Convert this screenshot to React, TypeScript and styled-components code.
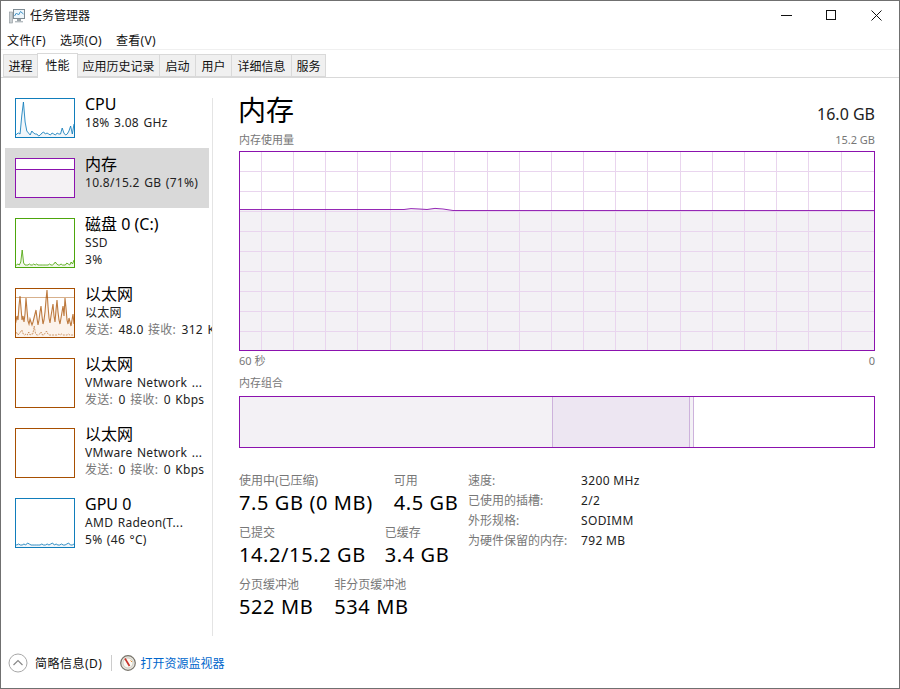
import React from "react";
import styled, { createGlobalStyle } from "styled-components";

const Global = createGlobalStyle`
  html, body { margin: 0; padding: 0; background: #fff; }
  body { font-family: "Noto Sans", "Noto Sans CJK SC", sans-serif; font-size: 12px; color: #000; }
  * { box-sizing: border-box; }
`;

const Window = styled.div`
  width: 900px; height: 689px; border: 1px solid #707070; display: flex; flex-direction: column; overflow: hidden; background: #fff;
`;
const TitleBar = styled.div`
  height: 29px; display: flex; align-items: center; padding-left: 8px; gap: 5px; flex: none;
`;
const TitleText = styled.span`font-size: 12px; color: #111; flex: 1; margin-top: -2px;`;
const Controls = styled.div`display: flex; align-items: center;`;
const ControlButton = styled.div`
  width: 45px; height: 29px; display: flex; align-items: center; justify-content: center;
  svg { display: block; margin-top: -1px; }
`;
const MenuBar = styled.div`
  height: 20px; display: flex; align-items: center; flex: none; padding: 1px 0 0 6px; gap: 14px; border-bottom: 1px solid #f0f0f0;
`;
const MenuItem = styled.span`font-size: 12px; color: #111; line-height: 19px; letter-spacing: 0.3px;`;
const TabStrip = styled.div`
  height: 28px; flex: none; display: flex; align-items: flex-end; padding-left: 2px; border-bottom: 1px solid #d9d9d9;
`;
const Tab = styled.div<{ $active?: boolean; $w: number }>`
  width: ${p => p.$w}px;
  height: ${p => (p.$active ? 25 : 23)}px;
  margin-bottom: ${p => (p.$active ? -1 : 0)}px;
  padding-bottom: ${p => (p.$active ? 3 : 0)}px;
  background: ${p => (p.$active ? "#fff" : "#f0f0f0")};
  border: 1px solid #d9d9d9;
  border-bottom: ${p => (p.$active ? "none" : "1px solid #d9d9d9")};
  margin-right: -1px;
  position: relative;
  z-index: ${p => (p.$active ? 1 : 0)};
  display: flex; align-items: center; justify-content: center;
  font-size: 12px; color: #111; white-space: nowrap;
`;
const Content = styled.div`flex: 1; display: flex; min-height: 0;`;
const Sidebar = styled.div`
  width: 212px; flex: none; padding-top: 10px; overflow: hidden; position: relative;
  &::after { content: ""; position: absolute; right: 0; top: 20px; bottom: 4px; width: 1px; background: #e4e4e4; }
`;
const Item = styled.div<{ $active?: boolean; $h: number }>`
  margin-left: 4px; width: 204px; height: ${p => p.$h}px; padding: 10px; display: flex; gap: 10px;
  background: ${p => (p.$active ? "#d9d9d9" : "transparent")};
`;
const ItemText = styled.div`margin-top: -4px; white-space: nowrap;`;
const ItemTitle = styled.div`font-size: 16px; line-height: 20px; color: #000;`;
const ItemLine = styled.div`font-size: 12px; line-height: 17px; color: #222; letter-spacing: 0.3px; word-spacing: 1px;`;
const Muted = styled.span`color: #777; margin-right: 1px;`;
const Main = styled.div`flex: 1; padding: 16px 24px 0 26px; min-width: 0;`;
const HeadRow = styled.div`display: flex; justify-content: space-between; align-items: flex-start; height: 39px;`;
const Heading = styled.h1`margin: 0 0 0 -1px; font-size: 28px; font-weight: 400; line-height: 32px; color: #000;`;
const Capacity = styled.span`font-size: 16px; line-height: 22px; color: #222; margin-top: 9px;`;
const CaptionRow = styled.div<{ $mt?: number; $mb?: number }>`
  display: flex; justify-content: space-between; font-size: 11px; line-height: 14px; color: #777;
  margin-top: ${p => p.$mt ?? 0}px; margin-bottom: ${p => p.$mb ?? 0}px;
`;
const ChartFrame = styled.svg`display: block; width: 636px;`;
const StatsArea = styled.div`display: flex; margin-top: 25px;`;
const StatsLeft = styled.div`width: 229px; flex: none; display: flex; flex-direction: column; gap: 9px;`;
const StatRow = styled.div<{ $gap: number }>`display: flex; gap: ${p => p.$gap}px; white-space: nowrap;`;
const Stat = styled.div``;
const StatLabel = styled.div`font-size: 12px; line-height: 16px; color: #777;`;
const StatValue = styled.div`font-size: 20px; line-height: 27px; color: #000; letter-spacing: 0.6px;`;
const Specs = styled.div`display: grid; grid-template-columns: 113px auto; grid-auto-rows: 20px; align-items: center; font-size: 12px; justify-content: start; margin-top: -3px; align-self: flex-start;`;
const SpecKey = styled.span`color: #777;`;
const SpecValue = styled.span`color: #222; letter-spacing: 0.35px;`;
const Footer = styled.div`height: 48px; flex: none; display: flex; align-items: center; padding: 0 0 2px 7px;`;
const FooterLabel = styled.span`font-size: 12px; color: #111; margin-left: 7px; letter-spacing: 0.5px;`;
const Divider = styled.span`width: 1px; height: 16px; background: #ccc; margin: 0 8px 0 9px;`;
const FooterLink = styled.span`font-size: 12px; color: #0066cc; margin-left: 4px;`;

const spark = (pts: number[], step: number) => pts.map((y, i) => `${i * step},${y}`).join(" ");

const cpuPts = [38, 36, 35, 36, 18, 4, 24, 33, 35, 37, 33, 35, 36, 36, 38, 37, 35, 34, 36, 35, 36, 37, 35, 36, 37, 35, 36, 36, 30, 35, 37, 36, 33, 28, 36, 26];
const diskPts = [47, 47, 46, 47, 44, 32, 45, 47, 47, 47, 46, 47, 47, 46, 47, 46, 47, 47, 47, 47, 47, 47, 47, 47, 46, 47, 47, 46, 44, 46, 47, 47, 46, 47, 47, 47, 45, 46, 47, 44, 46, 42];
const ethPts = [
  30, 33, 28, 32, 18, 8, 20, 32, 28, 34, 26, 10, 22, 33, 36, 31, 34, 37, 34, 30, 26, 22, 30, 37,
  32, 24, 18, 28, 36, 32, 24, 12, 2, 18, 30, 35, 28, 22, 16, 28, 34, 22, 12, 24, 32, 36, 30, 24, 18, 28,
  10, 20, 32, 36, 30, 34, 38, 32, 26, 36,
];
const ethLow = [46, 44, 47, 46, 44, 42, 46, 47, 46, 47, 44, 47, 46, 46, 38, 46, 47, 47, 46, 44, 47, 47, 45, 43, 46, 47, 47, 47, 47, 47, 47, 47, 46, 47, 46, 47, 47, 47, 47, 46, 47, 47, 47, 47];
const gpuPts = [46, 47, 46, 47, 47, 46, 47, 45, 46, 47, 47, 47, 47, 47, 47, 46, 47, 47, 46, 47, 46, 45, 47, 46, 47, 47, 46, 47, 47, 46, 45, 47, 47, 46];

type MiniProps = { color: string; fill: string; h: number; pts?: number[]; pts2?: number[]; level?: number; band?: number; weight?: number; fade?: number };
const MiniSvg = styled.svg`flex: none; display: block;`;
const Mini = ({ color, fill, h, pts, pts2, level, band, weight = 1, fade = 0.85 }: MiniProps) => {
  const step = pts ? 59 / (pts.length - 1) : 0;
  const line = pts ? spark(pts, step) : "";
  return (
    <MiniSvg width="60" height={h} viewBox={`0 0 60 ${h}`}>
      <rect width="60" height={h} fill="#fff" />
      {level !== undefined && <rect x="0" y={level} width="60" height={h - level} fill={fill} />}
      {pts && <polygon points={`0,${h} ${line} 59,${h}`} fill={fill} />}
      {band !== undefined && <line x1="0" x2="60" y1={band + 0.5} y2={band + 0.5} stroke={color} strokeOpacity="0.45" />}
      {pts && <polyline points={line} fill="none" stroke={color} strokeWidth={weight} opacity={fade} />}
      {pts2 && <polyline points={spark(pts2, 59 / (pts2.length - 1))} fill="none" stroke={color} strokeWidth="1" strokeDasharray="2 1" opacity="0.55" />}
      {level !== undefined && <line x1="0" x2="60" y1={level - 0.5} y2={level - 0.5} stroke={color} />}
      <rect x="0.5" y="0.5" width="59" height={h - 1} fill="none" stroke={color} />
    </MiniSvg>
  );
};

const MemoryChart = () => {
  const vx = [22, 54, 86, 118, 151, 183, 215, 248, 280, 312, 344, 376, 408, 441, 473, 505, 537, 569, 602];
  const hy = [20, 40, 60, 80, 100, 120, 140, 160, 180];
  return (
    <ChartFrame height="200" viewBox="0 0 636 200">
      <rect width="636" height="200" fill="#fff" />
      <polygon points="0,58 170,58 180,57.6 188,58 196,57 204,59 215,59 636,59 636,200 0,200" fill="#f3f1f5" />
      {vx.map(x => <line key={x} x1={x + 0.5} x2={x + 0.5} y1="0" y2="200" stroke="#e9d5ee" />)}
      {hy.map(y => <line key={y} x1="0" x2="636" y1={y + 0.5} y2={y + 0.5} stroke="#e9d5ee" />)}
      <polyline points="0,58.5 165,58.5 172,57.6 180,58 188,58.5 196,57.4 204,58 214,59.5 636,59.5" fill="none" stroke="#8b12ae" strokeOpacity="0.9" />
      <rect x="0.5" y="0.5" width="635" height="199" fill="none" stroke="#8b12ae" />
    </ChartFrame>
  );
};

const CompositionBar = () => (
  <ChartFrame height="52" viewBox="0 0 636 52">
    <rect width="636" height="52" fill="#fff" />
    <rect x="0" width="313" height="52" fill="#f3f1f5" />
    <rect x="313" width="138" height="52" fill="#ede6f2" />
    <rect x="451" width="3" height="52" fill="#f3f1f5" />
    <line x1="313.5" x2="313.5" y1="0" y2="52" stroke="#cdb2dc" />
    <line x1="450.5" x2="450.5" y1="0" y2="52" stroke="#cdb2dc" />
    <line x1="454.5" x2="454.5" y1="0" y2="52" stroke="#cdb2dc" />
    <rect x="0.5" y="0.5" width="635" height="51" fill="none" stroke="#8b12ae" />
  </ChartFrame>
);

const IconSvg = styled.svg`flex: none; display: block;`;
const AppIcon = () => (
  <IconSvg width="16" height="16" viewBox="0 0 16 16">
    <rect x="0.5" y="4" width="3" height="11" fill="#c9cfd2" stroke="#8b9398" strokeWidth="0.6" />
    <rect x="4.5" y="1.5" width="11" height="9" fill="#eef6fb" stroke="#7f8c94" />
    <polyline points="5.5,8 7.5,5 9.5,7 11.5,3.5 14.5,6" fill="none" stroke="#3f93c8" />
    <rect x="8" y="11" width="4" height="2" fill="#9aa3a8" />
    <rect x="6" y="13" width="8" height="1.4" fill="#b5bcc0" />
  </IconSvg>
);

const MonitorIcon = () => (
  <IconSvg width="16" height="16" viewBox="0 0 16 16">
    <circle cx="8" cy="8" r="7.3" fill="#e8e6df" stroke="#77736a" strokeWidth="1.2" />
    <circle cx="8" cy="8" r="5" fill="#fbfaf4" stroke="#b7b3a8" strokeWidth="0.6" />
    <line x1="5" y1="3.5" x2="9.5" y2="11" stroke="#c8322a" strokeWidth="1.7" />
    <path d="M10.5 5.5 L12 7" stroke="#e58a2c" strokeWidth="1" />
  </IconSvg>
);

const tabs: [string, number, boolean?][] = [
  ["进程", 35], ["性能", 41, true], ["应用历史记录", 83], ["启动", 37], ["用户", 37], ["详细信息", 61], ["服务", 35],
];

export default function App() {
  return (
    <Window>
      <Global />
      <TitleBar>
        <AppIcon />
        <TitleText>任务管理器</TitleText>
        <Controls>
          <ControlButton>
            <svg width="11" height="11" viewBox="0 0 11 11"><line x1="0" x2="11" y1="5.5" y2="5.5" stroke="#111" /></svg>
          </ControlButton>
          <ControlButton>
            <svg width="11" height="11" viewBox="0 0 11 11"><rect x="0.5" y="0.5" width="9" height="9" fill="none" stroke="#111" /></svg>
          </ControlButton>
          <ControlButton>
            <svg width="11" height="11" viewBox="0 0 11 11"><path d="M0.5 0.5 L10.5 10.5 M10.5 0.5 L0.5 10.5" stroke="#111" /></svg>
          </ControlButton>
        </Controls>
      </TitleBar>
      <MenuBar>
        <MenuItem>文件(F)</MenuItem>
        <MenuItem>选项(O)</MenuItem>
        <MenuItem>查看(V)</MenuItem>
      </MenuBar>
      <TabStrip>
        {tabs.map(([label, w, active]) => <Tab key={label} $w={w} $active={active}>{label}</Tab>)}
      </TabStrip>
      <Content>
        <Sidebar>
          <Item $h={60}>
            <Mini color="#117dbb" fill="#f1f6fa" h={40} pts={cpuPts} />
            <ItemText><ItemTitle>CPU</ItemTitle><ItemLine>18% 3.08 GHz</ItemLine></ItemText>
          </Item>
          <Item $h={60} $active>
            <Mini color="#8b12ae" fill="#f4f2f4" h={40} level={12} />
            <ItemText><ItemTitle>内存</ItemTitle><ItemLine>10.8/15.2 GB (71%)</ItemLine></ItemText>
          </Item>
          <Item $h={70}>
            <Mini color="#4da60c" fill="#f1f8ea" h={50} pts={diskPts} />
            <ItemText><ItemTitle>磁盘 0 (C:)</ItemTitle><ItemLine>SSD</ItemLine><ItemLine>3%</ItemLine></ItemText>
          </Item>
          <Item $h={70}>
            <Mini color="#a74f01" fill="#fcf3eb" h={50} pts={ethPts} pts2={ethLow} band={9} weight={1.1} fade={0.75} />
            <ItemText><ItemTitle>以太网</ItemTitle><ItemLine>以太网</ItemLine><ItemLine><Muted>发送:</Muted> 48.0 <Muted>接收:</Muted> 312 K</ItemLine></ItemText>
          </Item>
          <Item $h={70}>
            <Mini color="#a74f01" fill="#fcf3eb" h={50} />
            <ItemText><ItemTitle>以太网</ItemTitle><ItemLine>VMware Network ...</ItemLine><ItemLine><Muted>发送:</Muted> 0 <Muted>接收:</Muted> 0 Kbps</ItemLine></ItemText>
          </Item>
          <Item $h={70}>
            <Mini color="#a74f01" fill="#fcf3eb" h={50} />
            <ItemText><ItemTitle>以太网</ItemTitle><ItemLine>VMware Network ...</ItemLine><ItemLine><Muted>发送:</Muted> 0 <Muted>接收:</Muted> 0 Kbps</ItemLine></ItemText>
          </Item>
          <Item $h={70}>
            <Mini color="#117dbb" fill="#f1f6fa" h={50} pts={gpuPts} />
            <ItemText><ItemTitle>GPU 0</ItemTitle><ItemLine>AMD Radeon(T...</ItemLine><ItemLine>5% (46 °C)</ItemLine></ItemText>
          </Item>
        </Sidebar>
        <Main>
          <HeadRow>
            <Heading>内存</Heading>
            <Capacity>16.0 GB</Capacity>
          </HeadRow>
          <CaptionRow $mb={4}><span>内存使用量</span><span>15.2 GB</span></CaptionRow>
          <MemoryChart />
          <CaptionRow $mt={3}><span>60 秒</span><span>0</span></CaptionRow>
          <CaptionRow $mt={8} $mb={6}><span>内存组合</span></CaptionRow>
          <CompositionBar />
          <StatsArea>
            <StatsLeft>
              <StatRow $gap={21}>
                <Stat><StatLabel>使用中(已压缩)</StatLabel><StatValue>7.5 GB (0 MB)</StatValue></Stat>
                <Stat><StatLabel>可用</StatLabel><StatValue>4.5 GB</StatValue></Stat>
              </StatRow>
              <StatRow $gap={19}>
                <Stat><StatLabel>已提交</StatLabel><StatValue>14.2/15.2 GB</StatValue></Stat>
                <Stat><StatLabel>已缓存</StatLabel><StatValue>3.4 GB</StatValue></Stat>
              </StatRow>
              <StatRow $gap={21}>
                <Stat><StatLabel>分页缓冲池</StatLabel><StatValue>522 MB</StatValue></Stat>
                <Stat><StatLabel>非分页缓冲池</StatLabel><StatValue>534 MB</StatValue></Stat>
              </StatRow>
            </StatsLeft>
            <Specs>
              <SpecKey>速度:</SpecKey><SpecValue>3200 MHz</SpecValue>
              <SpecKey>已使用的插槽:</SpecKey><SpecValue>2/2</SpecValue>
              <SpecKey>外形规格:</SpecKey><SpecValue>SODIMM</SpecValue>
              <SpecKey>为硬件保留的内存:</SpecKey><SpecValue>792 MB</SpecValue>
            </Specs>
          </StatsArea>
        </Main>
      </Content>
      <Footer>
        <IconSvg width="20" height="20" viewBox="0 0 20 20">
          <circle cx="10" cy="10" r="9" fill="#fff" stroke="#a8a8a8" />
          <path d="M5.5 12 L10 7.5 L14.5 12" fill="none" stroke="#8a8a8a" strokeWidth="1.2" />
        </IconSvg>
        <FooterLabel>简略信息(D)</FooterLabel>
        <Divider />
        <MonitorIcon />
        <FooterLink>打开资源监视器</FooterLink>
      </Footer>
    </Window>
  );
}
